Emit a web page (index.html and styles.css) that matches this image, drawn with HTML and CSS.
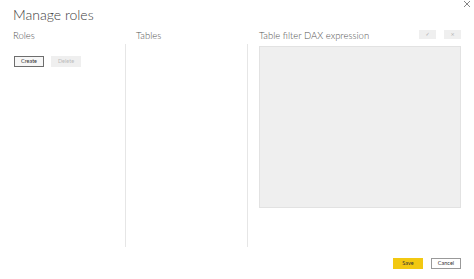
FILE: index.html
```html
<!DOCTYPE html>
<html>
<head>
<meta charset="utf-8">
<link rel="stylesheet" href="styles.css">
</head>
<body>
<div class="dialog">
  <div class="title">Manage roles</div>
  <button class="close" aria-label="Close">
    <svg width="8" height="8" viewBox="0 0 8 8"><path d="M1 1L7 7M7 1L1 7" stroke="#777" stroke-width="0.9"/></svg>
  </button>
  <div class="grid">
    <div class="head h1">Roles</div>
    <div class="head h2">Tables</div>
    <div class="head h3">
      <span>Table filter DAX expression</span>
      <div class="tools">
        <button class="tool">✓</button>
        <button class="tool">×</button>
      </div>
    </div>
    <div class="body b1">
      <button class="btn create">Create</button>
      <button class="btn delete">Delete</button>
    </div>
    <div class="body b2"></div>
    <div class="body b3">
      <div class="dax"></div>
    </div>
  </div>
  <div class="footer">
    <button class="fbtn save">Save</button>
    <button class="fbtn cancel">Cancel</button>
  </div>
</div>
</body>
</html>
```
FILE: styles.css
```css
* { box-sizing: border-box; }
html, body { margin: 0; padding: 0; background: #fff; }
body { width: 474px; height: 279px; overflow: hidden; font-family: Lato, "Open Sans", sans-serif; }
.dialog { position: relative; width: 474px; height: 279px; }
.title { padding: 6px 0 0 13px; height: 28px; font-size: 14px; font-weight: 300; color: #3c3c3c; line-height: 18px; }
.close { position: absolute; top: -1px; right: 2px; width: 10px; height: 10px; padding: 0; border: 0; background: none; display: flex; align-items: center; justify-content: center; }
.grid { display: grid; grid-template-columns: 125px 122px 1fr; grid-template-rows: 16px 203px; }
.head { font-size: 9.5px; font-weight: 300; color: #555; line-height: 16px; }
.h1 { padding-left: 13px; }
.h2 { padding-left: 11px; }
.h3 { padding-left: 12px; padding-right: 13px; display: flex; justify-content: space-between; align-items: center; }
.tools { display: flex; gap: 8px; align-self: flex-start; padding-top: 2px; }
.tool { width: 17px; height: 9px; padding: 0; border: 0; background: #efefef; color: #aaa; font-size: 5px; line-height: 9px; font-family: "DejaVu Sans", sans-serif; }
.b1 { padding: 12px 0 0 14px; display: flex; gap: 7px; align-items: flex-start; }
.b2 { border-left: 1px solid #e6e6e6; }
.b3 { border-left: 1px solid #e6e6e6; padding: 2px 13px 0 11px; }
.btn { width: 30px; height: 11px; padding: 0; font-family: inherit; font-size: 5.5px; line-height: 9px; }
.create { border: 1px solid #6d6d6d; background: #f7f7f7; color: #333; }
.delete { border: 1px solid #efefef; background: #efefef; color: #bbb; }
.dax { height: 162px; background: #efefef; border: 1px solid #e2e2e2; }
.footer { display: flex; justify-content: flex-end; gap: 8px; padding: 11px 13px 0 0; }
.fbtn { width: 30px; height: 11px; padding: 0; font-family: inherit; font-size: 5.5px; line-height: 9px; }
.save { background: #f2c811; border: 1px solid #f2c811; color: #333; }
.cancel { background: #fff; border: 1px solid #999; color: #333; }
```
